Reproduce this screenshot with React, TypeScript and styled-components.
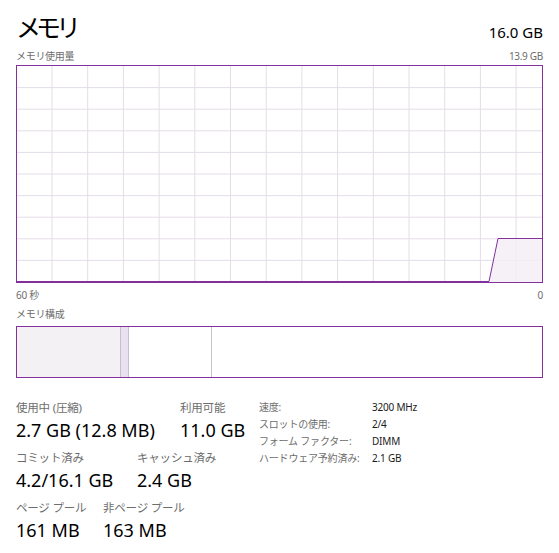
import React from "react";
import styled, { createGlobalStyle } from "styled-components";

const Global = createGlobalStyle`
  html, body {
    margin: 0;
    padding: 0;
    background: #ffffff;
  }
  body {
    font-family: "Noto Sans", "Noto Sans CJK JP", sans-serif;
    color: #000000;
  }
`;

const ACCENT = "#83309c";

const Page = styled.div`
  width: 559px;
  box-sizing: border-box;
  padding: 10px 16px 0 16px;
  display: flex;
  flex-direction: column;
  white-space: nowrap;
  & > * {
    flex-shrink: 0;
  }
`;

const HeaderRow = styled.div`
  display: flex;
  justify-content: space-between;
  align-items: flex-end;
  height: 32px;
`;

const Title = styled.h1`
  margin: 0;
  font-family: "Noto Sans CJK JP", sans-serif;
  font-weight: 400;
  font-size: 25px;
  line-height: 32px;
  letter-spacing: -5px;
`;

const Total = styled.div`
  font-size: 15px;
  line-height: 20px;
`;

const CaptionRow = styled.div`
  display: flex;
  justify-content: space-between;
  align-items: center;
  height: 18px;
  margin-top: 5px;
`;

const Caption = styled.span`
  font-size: 10px;
  color: #6d6d6d;
  line-height: 14px;
  letter-spacing: -0.3px;
`;

const GraphBox = styled.div`
  width: 527px;
  height: 218px;
  box-sizing: border-box;
  border: 1px solid ${ACCENT};
  svg {
    display: block;
  }
`;

const AxisRow = styled(CaptionRow)`
  height: 20px;
  margin-top: 2px;
`;

const SectionLabel = styled(Caption)`
  display: block;
  margin-top: 1px;
  height: 20px;
  line-height: 17px;
`;

const Bar = styled.div`
  width: 527px;
  height: 52px;
  box-sizing: border-box;
  border: 1px solid ${ACCENT};
  display: flex;
`;

const Segment = styled.div<{ $w?: number; $bg: string; $line?: string }>`
  ${(p) => (p.$w ? `width: ${p.$w}px;` : "flex: 1;")}
  background: ${(p) => p.$bg};
  border-right: ${(p) => (p.$line ? `1px solid ${p.$line}` : "none")};
`;

const Stats = styled.div`
  display: flex;
  margin-top: 22px;
`;

const StatsLeft = styled.div`
  width: 243px;
  flex-shrink: 0;
  display: flex;
  flex-direction: column;
  gap: 6px;
`;

const StatRow = styled.div<{ $first: number }>`
  display: grid;
  grid-template-columns: ${(p) => p.$first}px auto;
`;

const Stat = styled.div`
  display: flex;
  flex-direction: column;
`;

const StatLabel = styled.span`
  font-size: 11.5px;
  color: #6d6d6d;
  line-height: 16px;
  letter-spacing: -0.2px;
`;

const StatValue = styled.span`
  font-size: 18px;
  line-height: 28px;
  color: #000;
`;

const Table = styled.div`
  display: grid;
  grid-template-columns: 113px auto;
  grid-auto-rows: 17px;
  margin-top: -2px;
  font-size: 10px;
  letter-spacing: -0.2px;
  align-items: center;
`;

const TKey = styled.span`
  color: #6d6d6d;
`;

const TVal = styled.span`
  color: #1a1a1a;
`;

const W = 525;
const H = 216;

function UsageGraph() {
  const hLines = Array.from({ length: 9 }, (_, i) => (H / 10) * (i + 1));
  const vLines = Array.from({ length: 14 }, (_, i) => 35 + i * 35.7);
  return (
    <GraphBox>
      <svg width={W} height={H} viewBox={`0 0 ${W} ${H}`}>
        {hLines.map((y) => (
          <line key={"h" + y} x1={0} x2={W} y1={y} y2={y} stroke="#e4dde8" strokeWidth={1} />
        ))}
        {vLines.map((x) => (
          <line key={"v" + x} x1={x} x2={x} y1={0} y2={H} stroke="#e4dde8" strokeWidth={1} />
        ))}
        <polygon
          points={`472,${H} 481,172 ${W},172 ${W},${H}`}
          fill="#f3eff6"
          fillOpacity={0.85}
        />
        <polyline
          points={`0,${H - 0.5} 472,${H - 0.5} 481,172.5 ${W},172.5`}
          fill="none"
          stroke={ACCENT}
          strokeWidth={1}
        />
      </svg>
    </GraphBox>
  );
}

export default function App() {
  return (
    <>
      <Global />
      <Page>
        <HeaderRow>
          <Title>メモリ</Title>
          <Total>16.0 GB</Total>
        </HeaderRow>
        <CaptionRow>
          <Caption>メモリ使用量</Caption>
          <Caption>13.9 GB</Caption>
        </CaptionRow>
        <UsageGraph />
        <AxisRow>
          <Caption>60 秒</Caption>
          <Caption>0</Caption>
        </AxisRow>
        <SectionLabel>メモリ構成</SectionLabel>
        <Bar>
          <Segment $w={103} $bg="#f3f1f4" $line="#c9bdd0" />
          <Segment $w={7} $bg="#e9e1ef" $line="#c9bdd0" />
          <Segment $w={82} $bg="#ffffff" $line="#c8c2cc" />
          <Segment $bg="#ffffff" />
        </Bar>
        <Stats>
          <StatsLeft>
            <StatRow $first={164}>
              <Stat>
                <StatLabel>使用中 (圧縮)</StatLabel>
                <StatValue>2.7 GB (12.8 MB)</StatValue>
              </Stat>
              <Stat>
                <StatLabel>利用可能</StatLabel>
                <StatValue>11.0 GB</StatValue>
              </Stat>
            </StatRow>
            <StatRow $first={121}>
              <Stat>
                <StatLabel>コミット済み</StatLabel>
                <StatValue>4.2/16.1 GB</StatValue>
              </Stat>
              <Stat>
                <StatLabel>キャッシュ済み</StatLabel>
                <StatValue>2.4 GB</StatValue>
              </Stat>
            </StatRow>
            <StatRow $first={87}>
              <Stat>
                <StatLabel>ページ プール</StatLabel>
                <StatValue>161 MB</StatValue>
              </Stat>
              <Stat>
                <StatLabel>非ページ プール</StatLabel>
                <StatValue>163 MB</StatValue>
              </Stat>
            </StatRow>
          </StatsLeft>
          <Table>
            <TKey>速度:</TKey>
            <TVal>3200 MHz</TVal>
            <TKey>スロットの使用:</TKey>
            <TVal>2/4</TVal>
            <TKey>フォーム ファクター:</TKey>
            <TVal>DIMM</TVal>
            <TKey>ハードウェア予約済み:</TKey>
            <TVal>2.1 GB</TVal>
          </Table>
        </Stats>
      </Page>
    </>
  );
}
